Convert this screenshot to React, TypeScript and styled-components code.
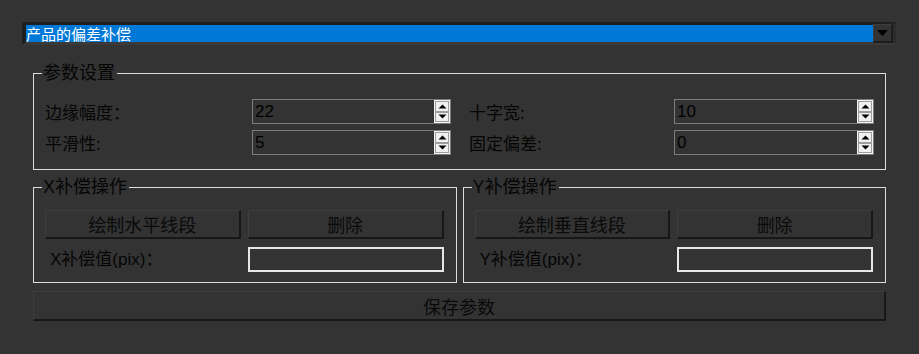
import React from "react";
import styled, { createGlobalStyle } from "styled-components";

const Global = createGlobalStyle`
  html, body { margin: 0; padding: 0; background: #333333; }
  body { width: 919px; height: 354px; overflow: hidden; }
  * { box-sizing: border-box; }
`;

const CJK = `"Noto Sans CJK SC", "Noto Sans", sans-serif`;
const LATIN_CJK = `"Liberation Sans", "Noto Sans CJK SC", sans-serif`;

const Page = styled.div`
  width: 919px;
  height: 354px;
  background: #333333;
  padding: 22px 23px 0 22px;
  display: flex;
  flex-direction: column;
`;

const Combo = styled.div`
  height: 23px;
  display: flex;
  border-top: 3px solid #1f1f1f;
  border-left: 4px solid #1f1f1f;
  border-right: 3px solid #2c2c2c;
  border-bottom: 3px solid #3a3a3a;
  background: #2c2c2c;
`;

const ComboText = styled.div`
  flex: 1;
  height: 17px;
  background: #0078d7;
  color: #ffffff;
  font-family: ${CJK};
  font-size: 15px;
  display: flex;
  align-items: center;
  white-space: nowrap;
`;

const ComboArrow = styled.div`
  width: 20px;
  height: 19px;
  margin-top: -1px;
  background: #333333;
  border-top: 1px solid #3c3c3c;
  border-left: 1px solid #3c3c3c;
  border-right: 2px solid #1c1c1c;
  border-bottom: 2px solid #1c1c1c;
  display: flex;
  align-items: center;
  justify-content: center;
`;

const Body = styled.div`
  margin: 28px 10px 0 11px;
  display: flex;
  flex-direction: column;
`;

const Group = styled.div`
  position: relative;
  border: 1px solid #dcdcdc;
`;

const GroupTitle = styled.span`
  position: absolute;
  top: -12px;
  left: 8px;
  padding: 0 2px 0 1px;
  background: #333333;
  color: #050505;
  font-family: ${LATIN_CJK};
  font-size: 18px;
  line-height: 22px;
  white-space: nowrap;
`;

const ParamGrid = styled.div`
  display: grid;
  grid-template-columns: 207px 199px 223px 200px;
  row-gap: 6px;
  padding: 25px 11px 14px 11px;
  align-items: center;
`;

const Label = styled.span<{ $indent?: number; $latin?: boolean }>`
  color: #050505;
  font-family: ${(p) => (p.$latin ? LATIN_CJK : CJK)};
  font-size: 17px;
  line-height: 20px;
  padding-left: ${(p) => p.$indent ?? 0}px;
  white-space: nowrap;
`;

const Spin = styled.div`
  height: 25px;
  border: 1px solid #7c7c7c;
  background: #333333;
  display: flex;
`;

const SpinValue = styled.div`
  flex: 1;
  color: #000000;
  font-family: "Liberation Sans", sans-serif;
  font-size: 17px;
  line-height: 23px;
  padding-left: 2px;
`;

const SpinButtons = styled.div`
  width: 16px;
  background: #f4f4f4;
  display: flex;
  flex-direction: column;
  padding: 1px;
`;

const SpinBtn = styled.div`
  flex: 1;
  border: 1px solid #9e9e9e;
  background: #f0f0f0;
  display: flex;
  align-items: center;
  justify-content: center;
`;

const Row2 = styled.div`
  display: flex;
  gap: 6px;
  margin-top: 17px;
`;

const OpGroup = styled(Group)`
  flex: 1;
`;

const OpGrid = styled.div`
  display: grid;
  grid-template-columns: 1fr 1fr;
  column-gap: 7px;
  row-gap: 8px;
  padding: 22px 12px 10px 11px;
  align-items: center;
`;

const Button = styled.div<{ $h?: number }>`
  height: ${(p) => p.$h ?? 29}px;
  background: #333333;
  border-top: 1px solid #3e3e3e;
  border-left: 1px solid #3e3e3e;
  border-right: 2px solid #171717;
  border-bottom: 2px solid #171717;
  color: #0a0a0a;
  font-family: ${CJK};
  font-size: 18px;
  display: flex;
  align-items: center;
  justify-content: center;
  white-space: nowrap;
`;

const LineEdit = styled.div`
  height: 25px;
  border: 2px solid #e6e6e6;
  background: #333333;
`;

const SaveButton = styled(Button)`
  margin-top: 8px;
`;

const Up = () => (
  <svg width="9" height="5" viewBox="0 0 9 5">
    <path d="M0.5 4.5 L4.5 0.5 L8.5 4.5 Z" fill="#000" />
  </svg>
);
const Down = () => (
  <svg width="9" height="5" viewBox="0 0 9 5">
    <path d="M0.5 0.5 L4.5 4.5 L8.5 0.5 Z" fill="#000" />
  </svg>
);

const SpinBox: React.FC<{ value: string }> = ({ value }) => (
  <Spin>
    <SpinValue>{value}</SpinValue>
    <SpinButtons>
      <SpinBtn>
        <Up />
      </SpinBtn>
      <SpinBtn>
        <Down />
      </SpinBtn>
    </SpinButtons>
  </Spin>
);

const OpBox: React.FC<{ title: string; draw: string; axis: string }> = ({ title, draw, axis }) => (
  <OpGroup>
    <GroupTitle>{title}</GroupTitle>
    <OpGrid>
      <Button>{draw}</Button>
      <Button>删除</Button>
      <Label $indent={5} $latin>
        {axis}补偿值(pix)：
      </Label>
      <LineEdit />
    </OpGrid>
  </OpGroup>
);

export default function App() {
  return (
    <>
      <Global />
      <Page>
        <Combo>
          <ComboText>产品的偏差补偿</ComboText>
          <ComboArrow>
            <svg width="11" height="6" viewBox="0 0 11 6">
              <path d="M0 0 L11 0 L5.5 6 Z" fill="#000" />
            </svg>
          </ComboArrow>
        </Combo>
        <Body>
          <Group>
            <GroupTitle>参数设置</GroupTitle>
            <ParamGrid>
              <Label>边缘幅度：</Label>
              <SpinBox value="22" />
              <Label $indent={18}>十字宽:</Label>
              <SpinBox value="10" />
              <Label>平滑性:</Label>
              <SpinBox value="5" />
              <Label $indent={18}>固定偏差:</Label>
              <SpinBox value="0" />
            </ParamGrid>
          </Group>
          <Row2>
            <OpBox title="X补偿操作" draw="绘制水平线段" axis="X" />
            <OpBox title="Y补偿操作" draw="绘制垂直线段" axis="Y" />
          </Row2>
          <SaveButton $h={30}>保存参数</SaveButton>
        </Body>
      </Page>
    </>
  );
}
